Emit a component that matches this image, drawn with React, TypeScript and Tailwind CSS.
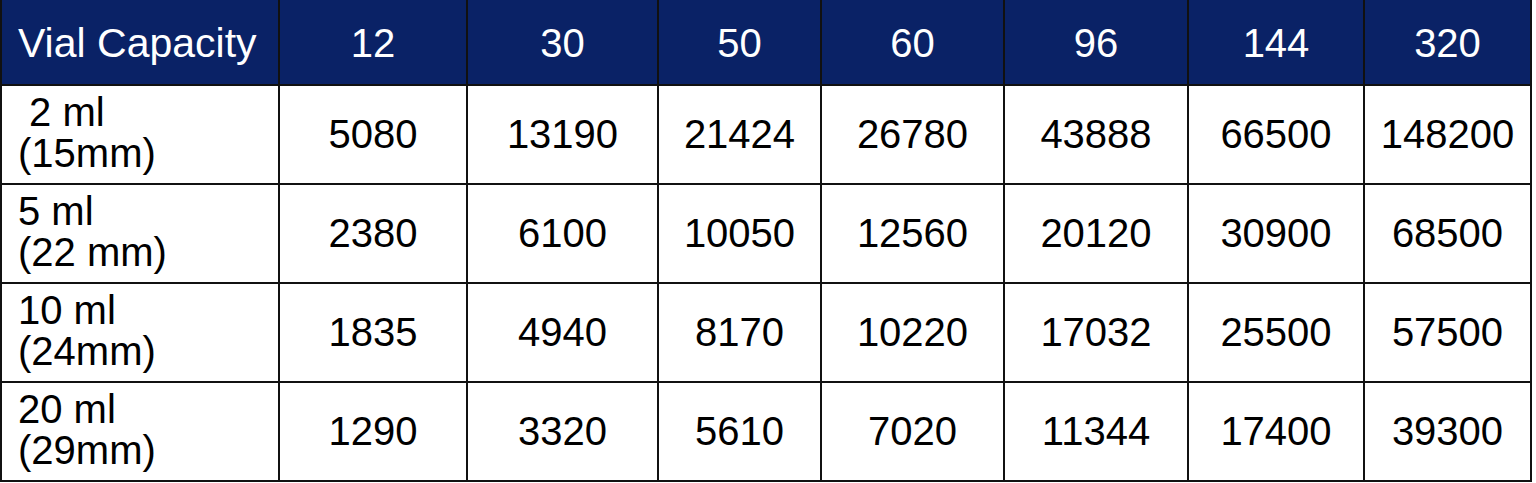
import React from "react";

const headers = ["12", "30", "50", "60", "96", "144", "320"];
const rows: { l1: string; l2: string; vals: string[] }[] = [
  { l1: "\u00a02 ml", l2: "(15mm)", vals: ["5080", "13190", "21424", "26780", "43888", "66500", "148200"] },
  { l1: "5 ml", l2: "(22 mm)", vals: ["2380", "6100", "10050", "12560", "20120", "30900", "68500"] },
  { l1: "10 ml", l2: "(24mm)", vals: ["1835", "4940", "8170", "10220", "17032", "25500", "57500"] },
  { l1: "20 ml", l2: "(29mm)", vals: ["1290", "3320", "5610", "7020", "11344", "17400", "39300"] },
];

export default function App() {
  return (
    <div className="w-[1536px] h-[483px] bg-white" style={{ fontFamily: '"Liberation Sans", Arial, sans-serif' }}>
      <div className="grid w-fit grid-cols-[276px_186px_189px_161px_181px_182px_174px_165px] grid-rows-[84px_97px_97px_97px_97px] gap-[2px] bg-[#111] px-[2px] pb-[2px] text-[40px] leading-[41px]">
        <div className="flex items-center bg-[#0a2266] pl-[16px] pt-[2px] text-[41px] text-white">Vial Capacity</div>
        {headers.map((h) => (
          <div key={h} className="flex items-center justify-center bg-[#0a2266] pt-[2px] text-white">
            {h}
          </div>
        ))}
        {rows.map((r) => (
          <React.Fragment key={r.l2}>
            <div className="flex flex-col justify-center bg-white pl-[16px] pb-[3px] text-black">
              <span>{r.l1}</span>
              <span>{r.l2}</span>
            </div>
            {r.vals.map((v, i) => (
              <div key={i} className="flex items-center justify-center bg-white text-black">
                {v}
              </div>
            ))}
          </React.Fragment>
        ))}
      </div>
    </div>
  );
}
